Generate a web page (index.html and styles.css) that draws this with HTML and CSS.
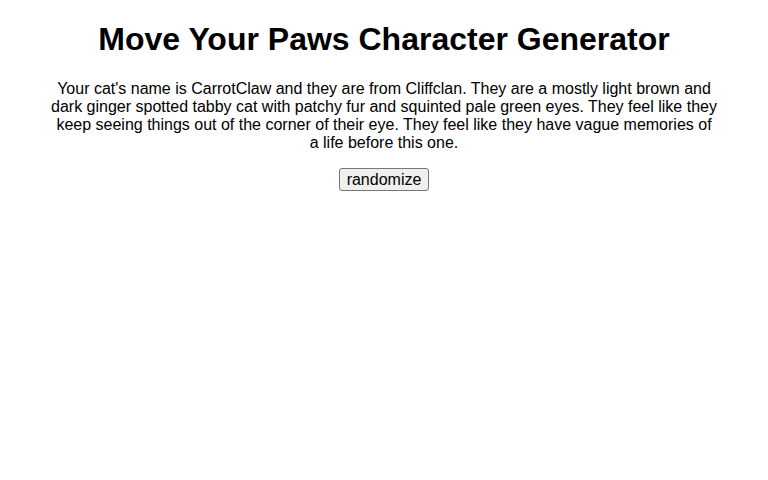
FILE: index.html
```html
<!DOCTYPE html>
<html lang="en">
<head>
  <meta charset="UTF-8" />
  <title>Move Your Paws Character Generator</title>
  <link rel="stylesheet" href="styles.css">
</head>
<body>
  <h1>Move Your Paws Character Generator</h1>

  <p class="result" id="result">Your cat's name is CarrotClaw and they are from Cliffclan. They are a mostly light brown and dark ginger spotted tabby cat with patchy fur and squinted pale green eyes. They feel like they keep seeing things out of the corner of their eye. They feel like they have vague memories of a life before this one.</p>

  <button class="randomize" onclick="randomize()">randomize</button>

  <script>
    const prefixes = ["Carrot", "Ash", "Moss", "Thistle", "Pebble", "Fern", "Hollow", "Storm"];
    const suffixes = ["Claw", "Pelt", "Whisker", "Tail", "Fang", "Leaf", "Heart", "Stripe"];
    const clans = ["Cliffclan", "Riverclan", "Pineclan", "Marshclan", "Duneclan"];
    const colours = ["light brown", "dark ginger", "silver", "black", "cream", "grey", "white"];
    const patterns = ["spotted tabby", "tortoiseshell", "solid", "mackerel tabby", "calico"];
    const furs = ["patchy", "fluffy", "sleek", "matted", "short"];
    const eyeShapes = ["squinted", "round", "narrow", "wide"];
    const eyes = ["pale green", "amber", "blue", "yellow", "copper"];
    const feelings = [
      "They feel like they keep seeing things out of the corner of their eye.",
      "They feel like the stars are watching them.",
      "They feel like someone is following them.",
      "They feel restless whenever it rains."
    ];
    const memories = [
      "They feel like they have vague memories of a life before this one.",
      "They feel like they have forgotten something important.",
      "They feel like they were meant for something bigger."
    ];

    function pick(list) {
      return list[Math.floor(Math.random() * list.length)];
    }

    function randomize() {
      const a = pick(colours);
      let b = pick(colours);
      while (b === a) b = pick(colours);
      document.getElementById("result").textContent =
        "Your cat's name is " + pick(prefixes) + pick(suffixes) +
        " and they are from " + pick(clans) + ". They are a mostly " + a + " and " + b + " " +
        pick(patterns) + " cat with " + pick(furs) + " fur and " + pick(eyeShapes) + " " +
        pick(eyes) + " eyes. " + pick(feelings) + " " + pick(memories);
    }
  </script>
</body>
</html>
```

FILE: styles.css
```css
body {
  margin: 0 8px 8px;
  font-family: "Liberation Sans", Arial, sans-serif;
  text-align: center;
  color: #000;
  background: #fff;
}

h1 {
  font-size: 2em;
  font-weight: bold;
}

.result {
  max-width: 668px;
  margin-left: auto;
  margin-right: auto;
  font-size: 16px;
}

.randomize {
  font-family: "Liberation Sans", Arial, sans-serif;
  font-size: 16px;
  color: #000;
  background: #efefef;
  border: 1px solid #767676;
  border-radius: 3px;
  padding: 2px 7px 1px;
  cursor: pointer;
}

.randomize:hover {
  background: #e5e5e5;
}
```
